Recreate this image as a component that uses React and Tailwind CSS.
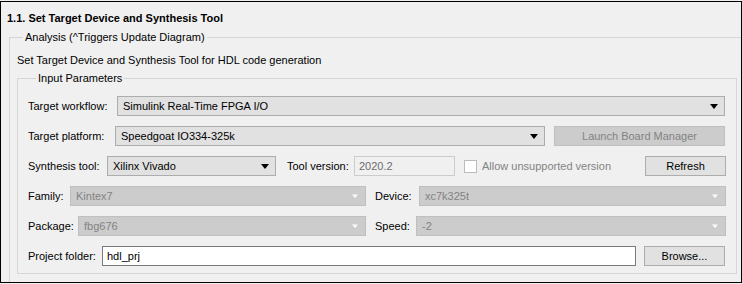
import React from 'react';

const font = { fontFamily: '"Liberation Sans", Arial, sans-serif' };

function Arrow({ disabled }) {
    return (
        <svg width="8" height="5" viewBox="0 0 8 5" className="shrink-0">
            {disabled
                ? <path d="M0 0 H8 L4 5 Z" fill="#f7f7f7" stroke="#b0b0b0" strokeWidth="0.5" />
                : <path d="M0 0 H8 L4 5 Z" fill="#000" />}
        </svg>
    );
}

function Select({ value, width, disabled }) {
    return (
        <div
            className={
                "h-[20px] flex items-center justify-between pl-[5px] pr-[6px] border " +
                (disabled
                    ? "bg-[#cccccc] border-[#bfbfbf] text-[#838383]"
                    : "bg-[#e1e1e1] border-[#adadad] text-black")
            }
            style={{ width }}
        >
            <span className="truncate">{value}</span>
            <Arrow disabled={disabled} />
        </div>
    );
}

function Button({ children, width, disabled }) {
    return (
        <div
            className={
                "h-[20px] flex items-center justify-center border " +
                (disabled
                    ? "bg-[#cccccc] border-[#bfbfbf] text-[#838383]"
                    : "bg-[#e1e1e1] border-[#adadad] text-black")
            }
            style={{ width }}
        >
            {children}
        </div>
    );
}

function Label({ children, width }) {
    return (
        <div className="shrink-0 text-black whitespace-nowrap" style={{ width }}>
            {children}
        </div>
    );
}

export default function App() {
    return (
        <div className="w-[742px] h-[284px] bg-[#f0f0f0] pt-[1px] text-[11px] leading-[14px]" style={font}>
            <div className="h-[282px] border border-black overflow-hidden">
                {/* titre */}
                <div className="h-[28px] pl-[6px] pt-[9px] font-bold text-black">
                    1.1. Set Target Device and Synthesis Tool
                </div>

                {/* Analysis */}
                <fieldset className="ml-[8px] border-t border-l border-[#d5d5d5] pl-[7px] h-[260px]">
                    <legend className="ml-[6px] px-[2px] leading-[14px] text-black">
                        Analysis (^Triggers Update Diagram)
                    </legend>
                    <div className="mt-[9px]">
                        Set Target Device and Synthesis Tool for HDL code generation
                    </div>

                    {/* Input Parameters */}
                    <fieldset className="mt-[4px] w-[719px] border border-[#d5d5d5] pl-[10px] pr-[10px] pt-[11px] pb-[7px]">
                        <legend className="ml-[8px] px-[2px] leading-[14px] text-black">
                            Input Parameters
                        </legend>
                        <div className="flex flex-col gap-[10px]">
                            <div className="flex items-center">
                                <Label width="89px">Target workflow:</Label>
                                <Select value="Simulink Real-Time FPGA I/O" width="608px" />
                            </div>

                            <div className="flex items-center">
                                <Label width="87px">Target platform:</Label>
                                <Select value="Speedgoat IO334-325k" width="430px" />
                                <div className="ml-[9px]">
                                    <Button width="171px" disabled>Launch Board Manager</Button>
                                </div>
                            </div>

                            <div className="flex items-center">
                                <Label width="79px">Synthesis tool:</Label>
                                <Select value="Xilinx Vivado" width="169px" />
                                <div className="ml-[11px] w-[67px] shrink-0">Tool version:</div>
                                <div className="h-[20px] w-[101px] border border-[#cccccc] bg-[#f0f0f0] text-[#6d6d6d] flex items-center pl-[4px]">
                                    2020.2
                                </div>
                                <div className="ml-[9px] w-[13px] h-[13px] border border-[#bcbcbc] bg-white shrink-0" />
                                <div className="ml-[5px] w-[163px] text-[#838383] whitespace-nowrap">Allow unsupported version</div>
                                <Button width="81px">Refresh</Button>
                            </div>

                            <div className="flex items-center">
                                <Label width="42px">Family:</Label>
                                <Select value="Kintex7" width="296px" disabled />
                                <div className="ml-[9px]">
                                    <Label width="44px">Device:</Label>
                                </div>
                                <Select value="xc7k325t" width="307px" disabled />
                            </div>

                            <div className="flex items-center">
                                <Label width="50px">Package:</Label>
                                <Select value="fbg676" width="288px" disabled />
                                <div className="ml-[9px]">
                                    <Label width="41px">Speed:</Label>
                                </div>
                                <Select value="-2" width="310px" disabled />
                            </div>

                            <div className="flex items-center">
                                <Label width="74px">Project folder:</Label>
                                <div className="h-[20px] w-[534px] border border-[#7a7a7a] bg-white flex items-center pl-[4px]">
                                    hdl_prj
                                </div>
                                <div className="ml-[8px]">
                                    <Button width="81px">Browse...</Button>
                                </div>
                            </div>
                        </div>
                    </fieldset>
                </fieldset>
            </div>
        </div>
    );
}
